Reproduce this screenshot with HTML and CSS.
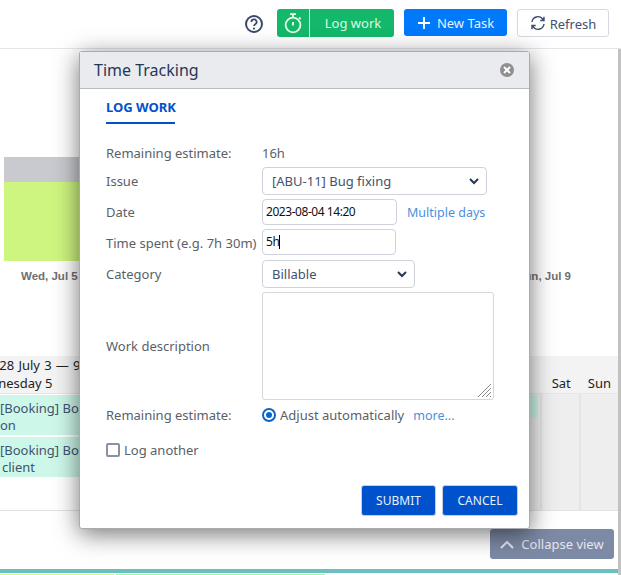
FILE: index.html
```html
<!DOCTYPE html>
<html lang="en">
<head>
<meta charset="utf-8">
<title>Time Tracking</title>
<link rel="stylesheet" href="styles.css">
</head>
<body>
<div class="page">
  <header class="topbar">
    <svg class="help" width="20" height="20" viewBox="0 0 20 20" fill="none" stroke="#3b4a6b" stroke-width="2"><circle cx="10" cy="10" r="8"/><path d="M7.4 8a2.6 2.6 0 1 1 3.900 2.200c-.9.5-1.300 1-1.300 1.800" stroke-width="1.800"/><circle cx="10" cy="14.600" r="1.100" fill="#3b4a6b" stroke="none"/></svg>
    <div class="logwork">
      <span class="logwork-icon"><svg width="20" height="22" viewBox="0 0 20 22" fill="none" stroke="#e6fbe9" stroke-width="1.800"><circle cx="10" cy="13" r="7.400"/><path d="M7 2.200h6M10 2.200v3M16 5.500l1.600 1.600M10 10v3.500"/></svg></span>
      <span class="logwork-label">Log work</span>
    </div>
    <div class="newtask"><svg width="14" height="14" viewBox="0 0 14 14" stroke="#fff" stroke-width="1.800"><path d="M7 1v12M1 7h12"/></svg><span>New Task</span></div>
    <div class="refresh"><svg width="16" height="16" viewBox="0 0 16 16" fill="none" stroke="#3b4a6b" stroke-width="1.400"><path d="M2 7a6 6 0 0 1 10.500-3.200L14 5.500M14 1.800v3.700h-3.700M14 9a6 6 0 0 1-10.500 3.200L2 10.500M2 14.200v-3.700h3.700"/></svg><span class="refresh-label">Refresh</span></div>
  </header>

  <main class="content">
    <section class="chart">
      <div class="bar"><div class="bar-top"></div><div class="bar-fill"></div><div class="bar-label">Wed, Jul 5</div></div>
      <div class="bar-end">Sun, Jul 9</div>
    </section>

    <section class="calendar">
      <div class="cal-head">
        <div class="cal-title">
          <div class="cal-range">June 26 — 28 July 3 — 9</div>
          <div class="cal-day">Wednesday 5</div>
        </div>
        <div class="cal-weekend"><span>Sat</span><span>Sun</span></div>
      </div>
      <div class="cal-body">
        <div class="cal-events">
          <div class="event"><span class="event-line">[Booking] Booking</span><span class="event-line">on</span></div>
          <div class="event"><span class="event-line">[Booking] Booking</span><span class="event-line event-indent">client</span></div>
        </div>
        <div class="cal-strip"><div class="strip-event"></div></div>
        <div class="cal-col"></div>
        <div class="cal-col cal-col-last"></div>
      </div>
    </section>

    <div class="collapse-row">
      <div class="collapse"><svg width="14" height="9" viewBox="0 0 14 9" fill="none" stroke="#e3e6ee" stroke-width="2"><path d="M1 8l6-6 6 6"/></svg><span>Collapse view</span></div>
    </div>

    <div class="footer-strip"></div>
    <div class="footer-line"><div class="footer-a"></div><div class="footer-b"></div></div>
  </main>

  <div class="modal">
    <div class="modal-head">
      <h1>Time Tracking</h1>
      <span class="close"><svg width="8" height="8" viewBox="0 0 8 8" stroke="#fff" stroke-width="2"><path d="M1 1l6 6M7 1L1 7"/></svg></span>
    </div>
    <div class="modal-body">
      <div class="tab">LOG WORK</div>
      <div class="form">
        <label class="lbl">Remaining estimate:</label>
        <div class="val">16h</div>
        <label class="lbl">Issue</label>
        <div class="select select-issue"><span>[ABU-11] Bug fixing</span><svg width="10" height="7" viewBox="0 0 10 7" fill="none" stroke="#253858" stroke-width="2"><path d="M1 1l4 4 4-4"/></svg></div>
        <label class="lbl">Date</label>
        <div class="inline">
          <div class="input input-date">2023-08-04 14:20</div>
          <a class="link">Multiple days</a>
        </div>
        <label class="lbl">Time spent (e.g. 7h 30m)</label>
        <div class="input input-time">5h<i class="caret"></i></div>
        <label class="lbl">Category</label>
        <div class="select select-cat"><span>Billable</span><svg width="10" height="7" viewBox="0 0 10 7" fill="none" stroke="#253858" stroke-width="2"><path d="M1 1l4 4 4-4"/></svg></div>
        <label class="lbl">Work description</label>
        <div class="textarea"><svg class="grip" width="15" height="15" viewBox="0 0 15 15" stroke="#8a8a8a" stroke-width="1"><path d="M1 14L14 1M5 14l9-9M9 14l5-5M13 14l1-1"/></svg></div>
        <label class="lbl">Remaining estimate:</label>
        <div class="radio-row"><span class="radio"></span><span class="radio-text">Adjust automatically</span><a class="link">more...</a></div>
      </div>
      <div class="another"><span class="check"></span><span>Log another</span></div>
      <div class="actions"><div class="btn">SUBMIT</div><div class="btn btn-cancel">CANCEL</div></div>
    </div>
  </div>
</div>
</body>
</html>
```
FILE: styles.css
```css
* { box-sizing: border-box; }
html, body { margin: 0; padding: 0; background: #fff; }
body { font-family: "Noto Sans", sans-serif; font-size: 13px; color: #42526e; }
.page { position: relative; width: 621px; height: 575px; overflow: hidden; display: flex; flex-direction: column; }

.topbar { height: 49px; flex: none; display: flex; align-items: flex-start; padding: 9px 12px 0 0; justify-content: flex-end; border-bottom: 1px solid #e4e6ea; }
.help { margin: 5px 13px 0 0; }
.logwork { display: flex; height: 28px; width: 117px; background: #14b86a; border-radius: 3px; color: #dff8e2; margin-right: 10px; }
.logwork-icon { width: 33px; display: flex; align-items: center; justify-content: center; border-right: 1px solid #d8f5de; }
.logwork-label { flex: 1; text-align: center; line-height: 28px; font-size: 13px; padding-left: 2px; }
.newtask { display: flex; align-items: center; justify-content: center; gap: 6px; width: 103px; height: 27px; background: #0079fb; border-radius: 3px; color: #e8f2ff; margin-right: 10px; }
.refresh { display: flex; align-items: center; justify-content: center; gap: 4px; width: 92px; height: 28px; border: 1px solid #d5d9e2; border-radius: 3px; color: #42526e; }
.refresh-label { padding-top: 1px; }

.content { flex: 1; display: flex; flex-direction: column; border-right: 3px solid #c2c2c2; }

.chart { height: 307px; flex: none; padding: 108px 47px 0 4px; display: flex; justify-content: space-between; align-items: flex-start; }
.bar { width: 100px; }
.bar-top { height: 25px; background: #c8cacf; }
.bar-fill { height: 79px; background: #cef57f; }
.bar-label { font-family: "Liberation Sans", sans-serif; font-size: 11.500px; font-weight: bold; color: #707070; margin-top: 9px; padding-left: 17px; }
.bar-end { font-family: "Liberation Sans", sans-serif; font-size: 11.500px; font-weight: bold; color: #707070; padding-top: 113px; }

.calendar { height: 155px; flex: none; background: #fff; border-bottom: 1px solid #e2e2e2; }
.cal-head { height: 38px; display: flex; background: #f3f3f3; color: #222; border-bottom: 1px solid #e6e6e6; }
.cal-title { flex: 1; overflow: hidden; white-space: nowrap; line-height: 18px; }
.cal-range { margin-left: -68px; word-spacing: .8px; }
.cal-day { margin-left: -29px; }
.cal-weekend { width: 78px; display: flex; align-items: flex-end; gap: 17px; padding: 0 7px 0 0; justify-content: flex-end; line-height: 20px; }
.cal-body { display: flex; height: 116px; }
.cal-events { width: 350px; display: flex; flex-direction: column; gap: 2px; padding-top: 1px; overflow: hidden; white-space: nowrap; background: #fff; }
.event { height: 40px; background: #cdf7e9; padding-top: 5px; line-height: 17px; }
.event-line { display: block; }
.event-indent { padding-left: 2px; }
.cal-strip { flex: 1; background: #eee; padding: 1px 2px 0 0; }
.strip-event { height: 23px; background: #cdf7e9; }
.cal-col { width: 39px; background: #eee; border-left: 2px solid #e4e4e4; }
.cal-col-last { width: 39px; }

.collapse-row { flex: none; height: 58px; display: flex; justify-content: flex-end; padding: 18px 4px 0 0; }
.collapse { width: 124px; height: 30px; border-radius: 3px; background: #7d8aa5; color: #e3e6ee; display: flex; align-items: center; justify-content: center; gap: 7px; }

.footer-strip { height: 4px; flex: none; background: #6cbfbf; }
.footer-line { height: 1px; margin-top: 1px; flex: none; display: flex; gap: 2px; width: 325px; }
.footer-a { width: 114px; background: #d8f58a; }
.footer-b { flex: 1; background: #a8f5a8; }

.modal { position: absolute; left: 79px; top: 51px; width: 451px; height: 478px; background: #fff; border: 1px solid #a8aab0; border-radius: 3px; box-shadow: 0 5px 25px rgba(0,0,0,.55); display: flex; flex-direction: column; }
.modal-head { height: 37px; flex: none; background: #e9ebef; border-bottom: 1px solid #b9bbc0; display: flex; align-items: center; justify-content: space-between; padding: 0 15px 0 14px; }
.modal-head h1 { margin: 0; font-size: 16px; font-weight: 400; color: #253858; }
.close { width: 14px; height: 14px; border-radius: 50%; background: #8f8f8f; display: flex; align-items: center; justify-content: center; }
.modal-body { flex: 1; padding: 0 11px 0 26px; display: flex; flex-direction: column; }
.tab { align-self: flex-start; width: 69px; height: 35px; padding-top: 8px; font-size: 13px; line-height: 20px; font-weight: 700; color: #0052cc; border-bottom: 2px solid #0052cc; white-space: nowrap; }

.form { display: grid; grid-template-columns: 156px 1fr; row-gap: 4px; margin-top: 19px; align-items: center; }
.lbl { white-space: nowrap; color: #5a5f68; }
.val { height: 20px; line-height: 20px; color: #5a5f68; }
.select { height: 28px; border: 1px solid #ced2da; border-radius: 4px; display: flex; align-items: center; justify-content: space-between; padding: 0 7px 0 9px; color: #42526e; }
.select-issue { width: 225px; }
.select-cat { width: 153px; }
.inline { display: flex; align-items: center; gap: 10px; }
.input { height: 26px; border: 1px solid #ced2da; border-radius: 4px; color: #111; font-size: 12px; letter-spacing: -.45px; line-height: 24px; padding-left: 3px; }
.input-date { width: 135px; }
.input-time { width: 134px; margin-bottom: 1px; }
.caret { display: inline-block; width: 1px; height: 14px; background: #000; vertical-align: -3px; }
.link { color: #4a8fe0; font-size: 12.500px; }
.textarea { width: 232px; height: 108px; border: 1px solid #d5d7dc; border-radius: 3px; position: relative; }
.grip { position: absolute; right: 1px; bottom: 1px; }
.radio-row { display: flex; align-items: center; height: 22px; color: #5a5f68; }
.radio { width: 14px; height: 14px; border-radius: 50%; border: 2px solid #0b63ce; position: relative; margin-right: 4px; }
.radio::after { content: ""; position: absolute; left: 2px; top: 2px; width: 6px; height: 6px; border-radius: 50%; background: #0b63ce; }
.radio-text { margin-right: 9px; }
.another { display: flex; align-items: center; gap: 4px; margin-top: 15px; color: #5a5f68; }
.check { width: 14px; height: 14px; border: 2px solid #8f8fa3; border-radius: 2px; }
.actions { display: flex; justify-content: flex-end; gap: 6px; margin-top: 26px; }
.btn { width: 75px; height: 31px; background: #0052cc; color: #e9f0fb; border: 1px solid #c4cfe2; border-radius: 3px; display: flex; align-items: center; justify-content: center; font-size: 12px; }
.btn-cancel { width: 76px; }
```
